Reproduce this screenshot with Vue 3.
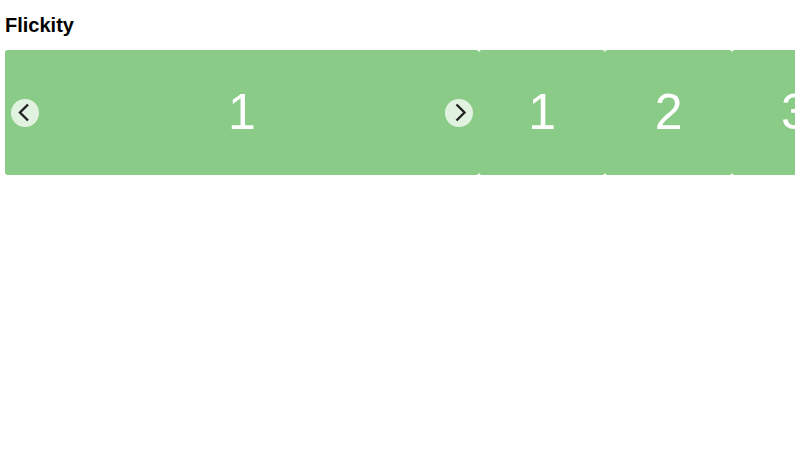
<template>
  <div class="page">
    <h2 class="title">Flickity</h2>
    <div class="gallery">
      <div class="slide main">
        1
        <button class="nav prev" aria-label="Previous">
          <svg viewBox="0 0 28 28" width="28" height="28"><path d="M17 5.5 L9 13.5 L17 21.5" /></svg>
        </button>
        <button class="nav next" aria-label="Next">
          <svg viewBox="0 0 28 28" width="28" height="28"><path d="M11.5 5.5 L19.5 13.5 L11.5 21.5" /></svg>
        </button>
      </div>
      <div v-for="n in thumbs" :key="n" class="slide thumb">{{ n }}</div>
    </div>
  </div>
</template>

<script setup>
const thumbs = [1, 2, 3]
</script>

<style>
html, body { background: #fff; }
</style>

<style scoped>
.page { padding: 5px; font-family: "Liberation Sans", Arial, sans-serif; }
.title { margin: 7px 0 12px; font-size: 20px; line-height: 26px; font-weight: 700; color: #000; }
.gallery { display: flex; overflow: hidden; }
.slide {
  position: relative;
  flex: none;
  height: 125px;
  display: flex;
  align-items: center;
  justify-content: center;
  background: #8acb88;
  border-radius: 3px;
  color: #fff;
  font-size: 50px;
  line-height: 1;
  padding-bottom: 2px;
  box-sizing: border-box;
}
.main { width: 60%; }
.thumb { width: 16%; }
.nav {
  position: absolute;
  top: 49px;
  width: 28px;
  height: 28px;
  padding: 0;
  border: none;
  border-radius: 50%;
  background: rgba(255, 255, 255, 0.75);
}
.nav svg { display: block; }
.nav path { fill: none; stroke: #222; stroke-width: 2.4; }
.prev { left: 6px; }
.next { right: 6px; }
</style>
